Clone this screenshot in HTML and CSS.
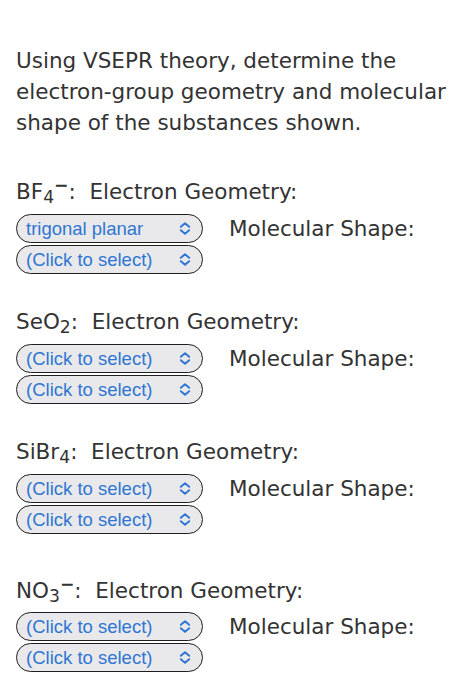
FILE: index.html
```html
<!DOCTYPE html>
<html lang="en">
<head>
  <meta charset="UTF-8" />
  <meta name="viewport" content="width=device-width, initial-scale=1.0"/>
  <title>VSEPR - Electron Geometry</title>
  <link rel="stylesheet" href="styles.css">
</head>
<body>
  <div class="container">
    <p class="intro">Using VSEPR theory, determine the electron-group geometry and molecular shape of the substances shown.</p>

    <!-- BF4- -->
    <div class="item">
      <div class="formula">BF<sub>4</sub><sup>−</sup>:&nbsp; Electron Geometry:</div>
      <div class="answer-row">
        <span class="pick">
          <select>
            <option>trigonal planar</option>
            <option>(Click to select)</option>
          </select>
          <svg class="chev" viewBox="0 0 10 12"><path d="M1.5 4.6 L5 1.6 L8.5 4.6 M1.5 7.4 L5 10.4 L8.5 7.4" /></svg>
        </span>
        <span class="shape-label">Molecular Shape:</span>
      </div>
      <div class="answer-row">
        <span class="pick">
          <select><option>(Click to select)</option></select>
          <svg class="chev" viewBox="0 0 10 12"><path d="M1.5 4.6 L5 1.6 L8.5 4.6 M1.5 7.4 L5 10.4 L8.5 7.4" /></svg>
        </span>
      </div>
    </div>

    <!-- SeO2 -->
    <div class="item">
      <div class="formula">SeO<sub>2</sub>:&nbsp; Electron Geometry:</div>
      <div class="answer-row">
        <span class="pick">
          <select><option>(Click to select)</option></select>
          <svg class="chev" viewBox="0 0 10 12"><path d="M1.5 4.6 L5 1.6 L8.5 4.6 M1.5 7.4 L5 10.4 L8.5 7.4" /></svg>
        </span>
        <span class="shape-label">Molecular Shape:</span>
      </div>
      <div class="answer-row">
        <span class="pick">
          <select><option>(Click to select)</option></select>
          <svg class="chev" viewBox="0 0 10 12"><path d="M1.5 4.6 L5 1.6 L8.5 4.6 M1.5 7.4 L5 10.4 L8.5 7.4" /></svg>
        </span>
      </div>
    </div>

    <!-- SiBr4 -->
    <div class="item">
      <div class="formula">SiBr<sub>4</sub>:&nbsp; Electron Geometry:</div>
      <div class="answer-row">
        <span class="pick">
          <select><option>(Click to select)</option></select>
          <svg class="chev" viewBox="0 0 10 12"><path d="M1.5 4.6 L5 1.6 L8.5 4.6 M1.5 7.4 L5 10.4 L8.5 7.4" /></svg>
        </span>
        <span class="shape-label">Molecular Shape:</span>
      </div>
      <div class="answer-row">
        <span class="pick">
          <select><option>(Click to select)</option></select>
          <svg class="chev" viewBox="0 0 10 12"><path d="M1.5 4.6 L5 1.6 L8.5 4.6 M1.5 7.4 L5 10.4 L8.5 7.4" /></svg>
        </span>
      </div>
    </div>

    <!-- NO3- -->
    <div class="item">
      <div class="formula">NO<sub>3</sub><sup>−</sup>:&nbsp; Electron Geometry:</div>
      <div class="answer-row">
        <span class="pick">
          <select><option>(Click to select)</option></select>
          <svg class="chev" viewBox="0 0 10 12"><path d="M1.5 4.6 L5 1.6 L8.5 4.6 M1.5 7.4 L5 10.4 L8.5 7.4" /></svg>
        </span>
        <span class="shape-label">Molecular Shape:</span>
      </div>
      <div class="answer-row">
        <span class="pick">
          <select><option>(Click to select)</option></select>
          <svg class="chev" viewBox="0 0 10 12"><path d="M1.5 4.6 L5 1.6 L8.5 4.6 M1.5 7.4 L5 10.4 L8.5 7.4" /></svg>
        </span>
      </div>
    </div>
  </div>
</body>
</html>
```

FILE: styles.css
```css
body {
  font-family: "DejaVu Sans", sans-serif;
  margin: 0;
  background: #fff;
  color: #333;
}

.container {
  padding: 45px 2px 20px 16px;
}

.intro {
  margin: 0 0 29px;
  font-size: 21.5px;
  line-height: 31px;
}

.item {
  margin-bottom: 32px;
}

.formula {
  font-size: 21.5px;
  line-height: 31px;
  margin-bottom: 7px;
}

.formula sub {
  font-size: 0.8em;
  vertical-align: -0.25em;
  line-height: 0;
}

/* the charge mark lifts the line a little, as in the original */
.formula sup {
  font-size: 0.8em;
  font-weight: bold;
  vertical-align: 0.45em;
  line-height: 37px;
}

.answer-row {
  display: flex;
  align-items: center;
  margin-bottom: 2px;
}

.pick {
  position: relative;
  display: inline-block;
}

.pick select {
  -webkit-appearance: none;
  appearance: none;
  display: block;
  width: 187px;
  height: 29px;
  padding: 0 30px 0 9px;
  border: 1.5px solid #1e1e1e;
  border-radius: 15px;
  background: #e9e9ec;
  color: #2f76d2;
  font-family: "Liberation Sans", Arial, sans-serif;
  font-size: 18.5px;
  outline: none;
}

.chev {
  position: absolute;
  right: 12px;
  top: 7px;
  width: 12px;
  height: 15px;
  fill: none;
  stroke: #2f76d2;
  stroke-width: 1.6;
  stroke-linecap: round;
  stroke-linejoin: round;
  pointer-events: none;
}

.shape-label {
  margin-left: 26px;
  font-size: 21.5px;
}
```
